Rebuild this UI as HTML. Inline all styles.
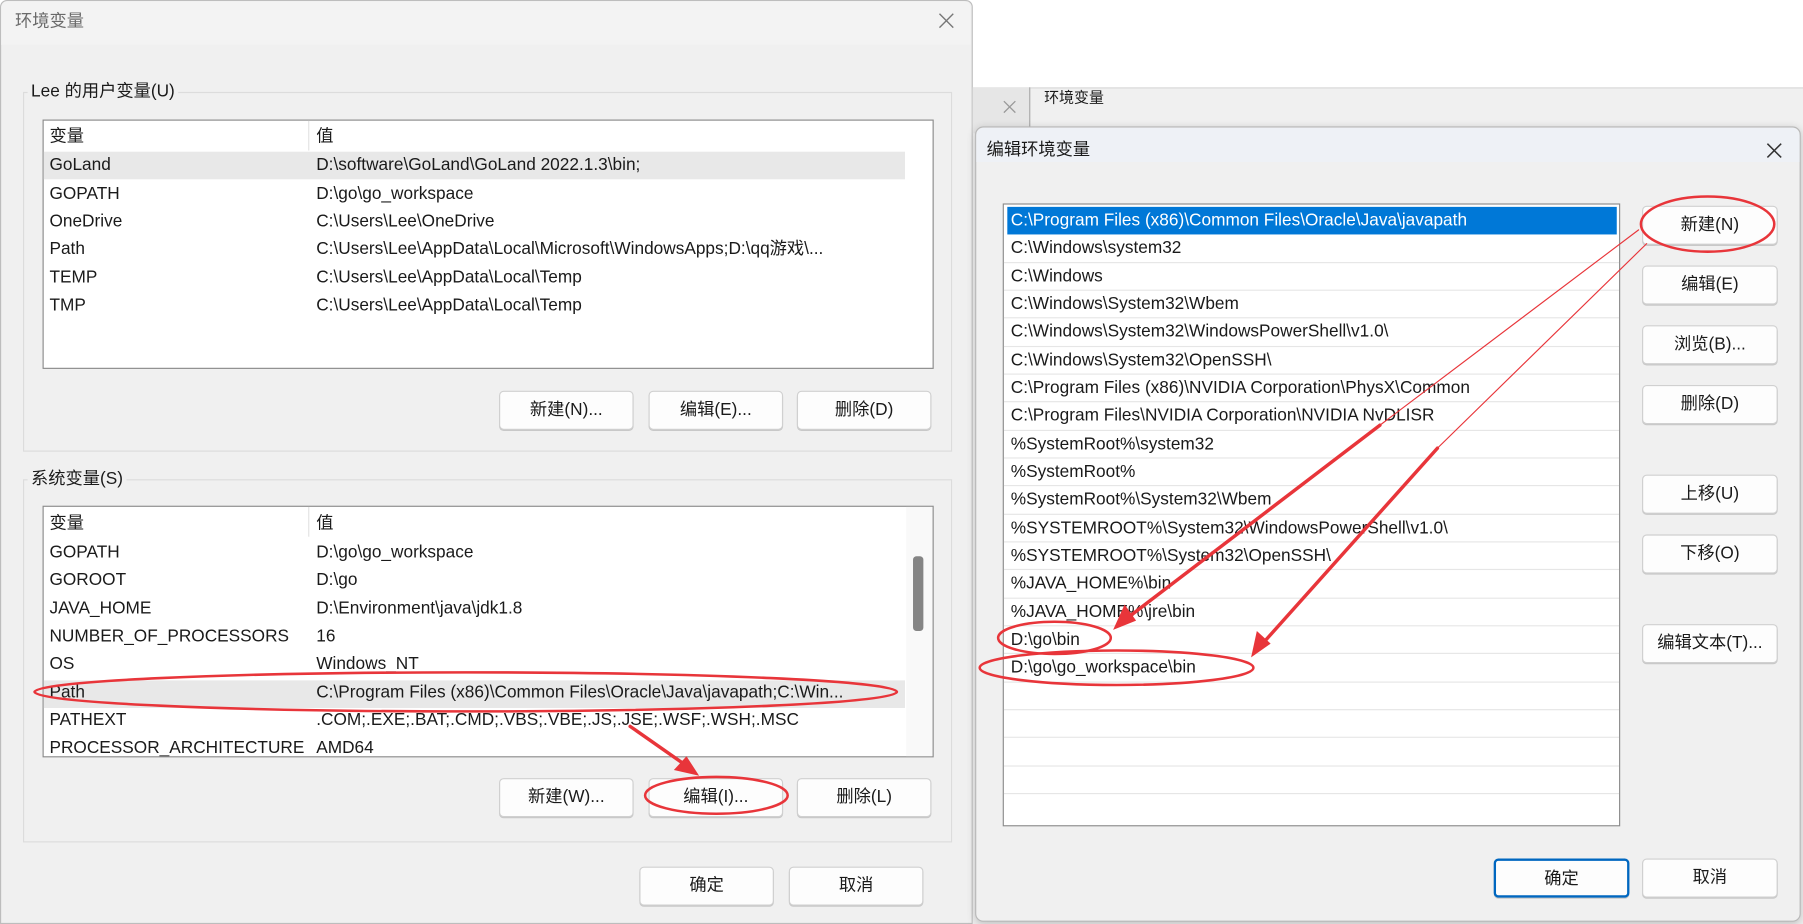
<!DOCTYPE html>
<html><head><meta charset="utf-8"><style>
*{margin:0;padding:0;box-sizing:border-box}
html,body{width:1803px;height:924px;overflow:hidden;background:#fff}
#s{position:absolute;left:0;top:0;width:1568px;height:804px;transform:scale(1.1499,1.1493);transform-origin:0 0;font-family:"Liberation Sans","Noto Sans CJK SC",sans-serif;font-size:15px;color:#1a1a1a}
.a{position:absolute}
.t{position:absolute;white-space:nowrap;line-height:20px}
.btn{position:absolute;background:#fdfdfd;border:1px solid #d0d0d0;border-radius:4px;text-align:center;font-size:15px;line-height:32px;box-shadow:0 1px 0 #c8c8c8}
.list{position:absolute;background:#fff;border:1px solid #8a8a8a}
.grp{position:absolute;border:1px solid #dcdcdc}
.lbl{position:absolute;background:#f0f0f0;padding:0 3px;line-height:20px;white-space:nowrap}
.row{position:absolute;left:0;right:0;height:24px}
.sep{position:absolute;left:0;right:0;height:1px;background:#e6e6e6}
</style></head><body><div id="s">
<!-- left dialog -->
<div class="a" style="left:0;top:0;width:846px;height:804px;background:#f0f0f0;border:1px solid #bdbdbd;border-radius:6px 6px 0 0"></div>
<div class="a" style="left:1px;top:1px;width:843px;height:38px;background:#f3f3f3;border-radius:6px 6px 0 0"></div>
<div class="t" style="left:13px;top:9px;color:#6a6a6a">环境变量</div>
<svg class="a" style="left:816px;top:11px" width="14" height="14"><path d="M1 1L13 13M13 1L1 13" stroke="#777" stroke-width="1.2"/></svg>

<div class="grp" style="left:20px;top:80px;width:808px;height:313px"></div>
<div class="lbl" style="left:24px;top:70px">Lee 的用户变量(U)</div>
<div class="list" style="left:37px;top:104px;width:775px;height:217px">
 <div class="row" style="top:27px;right:24px;background:#e8e8e8"></div>
 <div class="a" style="left:230px;top:0;width:1px;height:26px;background:#e2e2e2"></div>
 <div class="t" style="left:5px;top:4px">变量</div><div class="t" style="left:237px;top:4px">值</div>
 <div class="t" style="left:5px;top:29px">GoLand</div><div class="t" style="left:237px;top:29px">D:\software\GoLand\GoLand 2022.1.3\bin;</div>
 <div class="t" style="left:5px;top:54px">GOPATH</div><div class="t" style="left:237px;top:54px">D:\go\go_workspace</div>
 <div class="t" style="left:5px;top:78px">OneDrive</div><div class="t" style="left:237px;top:78px">C:\Users\Lee\OneDrive</div>
 <div class="t" style="left:5px;top:102px">Path</div><div class="t" style="left:237px;top:102px">C:\Users\Lee\AppData\Local\Microsoft\WindowsApps;D:\qq游戏\...</div>
 <div class="t" style="left:5px;top:127px">TEMP</div><div class="t" style="left:237px;top:127px">C:\Users\Lee\AppData\Local\Temp</div>
 <div class="t" style="left:5px;top:151px">TMP</div><div class="t" style="left:237px;top:151px">C:\Users\Lee\AppData\Local\Temp</div>
</div>
<div class="btn" style="left:434px;top:340px;width:117px;height:34px">新建(N)...</div>
<div class="btn" style="left:564px;top:340px;width:117px;height:34px">编辑(E)...</div>
<div class="btn" style="left:693px;top:340px;width:117px;height:34px">删除(D)</div>

<div class="grp" style="left:20px;top:417px;width:808px;height:316px"></div>
<div class="lbl" style="left:24px;top:407px">系统变量(S)</div>
<div class="list" style="left:37px;top:440px;width:775px;height:219px;overflow:hidden">
 <div class="row" style="top:151px;right:24px;background:#e8e8e8"></div>
 <div class="a" style="left:230px;top:0;width:1px;height:26px;background:#e2e2e2"></div>
 <div class="a" style="left:750px;top:0;width:23px;height:217px;background:#f9f9f9"></div>
 <div class="a" style="left:756px;top:43px;width:9px;height:65px;background:#858585;border-radius:3px"></div>
 <div class="t" style="left:5px;top:5px">变量</div><div class="t" style="left:237px;top:5px">值</div>
 <div class="t" style="left:5px;top:30px">GOPATH</div><div class="t" style="left:237px;top:30px">D:\go\go_workspace</div>
 <div class="t" style="left:5px;top:54px">GOROOT</div><div class="t" style="left:237px;top:54px">D:\go</div>
 <div class="t" style="left:5px;top:79px">JAVA_HOME</div><div class="t" style="left:237px;top:79px">D:\Environment\java\jdk1.8</div>
 <div class="t" style="left:5px;top:103px">NUMBER_OF_PROCESSORS</div><div class="t" style="left:237px;top:103px">16</div>
 <div class="t" style="left:5px;top:127px">OS</div><div class="t" style="left:237px;top:127px">Windows_NT</div>
 <div class="t" style="left:5px;top:152px">Path</div><div class="t" style="left:237px;top:152px">C:\Program Files (x86)\Common Files\Oracle\Java\javapath;C:\Win...</div>
 <div class="t" style="left:5px;top:176px">PATHEXT</div><div class="t" style="left:237px;top:176px">.COM;.EXE;.BAT;.CMD;.VBS;.VBE;.JS;.JSE;.WSF;.WSH;.MSC</div>
 <div class="t" style="left:5px;top:200px">PROCESSOR_ARCHITECTURE</div><div class="t" style="left:237px;top:200px">AMD64</div>
</div>
<div class="btn" style="left:434px;top:677px;width:117px;height:34px">新建(W)...</div>
<div class="btn" style="left:564px;top:677px;width:117px;height:34px">编辑(I)...</div>
<div class="btn" style="left:693px;top:677px;width:117px;height:34px">删除(L)</div>
<div class="btn" style="left:556px;top:754px;width:117px;height:34px">确定</div>
<div class="btn" style="left:686px;top:754px;width:117px;height:34px">取消</div>

<!-- behind window -->
<div class="a" style="left:846px;top:76px;width:722px;height:728px;background:#f0f0f0;border-top:1px solid #d8d8d8"></div>
<div class="a" style="left:846px;top:76px;width:50px;height:40px;background:#e6e6e6;border-right:1px solid #aaa"></div>
<svg class="a" style="left:872px;top:87px" width="12" height="12"><path d="M1 1L11 11M11 1L1 11" stroke="#999" stroke-width="1.1"/></svg>
<div class="t" style="left:908px;top:75px;font-size:13px">环境变量</div>

<!-- edit dialog -->
<div class="a" style="left:848px;top:110px;width:718px;height:692px;background:#f0f0f0;border:1px solid #b8b8b8;border-radius:7px;box-shadow:0 2px 8px rgba(0,0,0,.2)"></div>
<div class="a" style="left:849px;top:111px;width:716px;height:30px;background:#eef1f6;border-radius:7px 7px 0 0"></div>
<div class="t" style="left:858px;top:121px">编辑环境变量</div>
<svg class="a" style="left:1536px;top:124px" width="14" height="14"><path d="M1 1L13 13M13 1L1 13" stroke="#333" stroke-width="1.3"/></svg>
<div class="list" style="left:872px;top:177px;width:537px;height:542px;overflow:hidden">
 <div class="a" style="left:3px;top:2px;width:530px;height:24px;background:#0078d7"></div>
 <div class="t" style="left:6px;top:4px;color:#fff">C:\Program Files (x86)\Common Files\Oracle\Java\javapath</div>
 <div class="sep" style="top:50px"></div><div class="sep" style="top:74px"></div><div class="sep" style="top:98px"></div><div class="sep" style="top:123px"></div><div class="sep" style="top:147px"></div><div class="sep" style="top:171px"></div><div class="sep" style="top:196px"></div><div class="sep" style="top:220px"></div><div class="sep" style="top:244px"></div><div class="sep" style="top:269px"></div><div class="sep" style="top:293px"></div><div class="sep" style="top:317px"></div><div class="sep" style="top:342px"></div><div class="sep" style="top:366px"></div><div class="sep" style="top:390px"></div><div class="sep" style="top:415px"></div><div class="sep" style="top:439px"></div><div class="sep" style="top:463px"></div><div class="sep" style="top:488px"></div><div class="sep" style="top:512px"></div>
 <div class="t" style="left:6px;top:28px">C:\Windows\system32</div>
 <div class="t" style="left:6px;top:53px">C:\Windows</div>
 <div class="t" style="left:6px;top:77px">C:\Windows\System32\Wbem</div>
 <div class="t" style="left:6px;top:101px">C:\Windows\System32\WindowsPowerShell\v1.0\</div>
 <div class="t" style="left:6px;top:126px">C:\Windows\System32\OpenSSH\</div>
 <div class="t" style="left:6px;top:150px">C:\Program Files (x86)\NVIDIA Corporation\PhysX\Common</div>
 <div class="t" style="left:6px;top:174px">C:\Program Files\NVIDIA Corporation\NVIDIA NvDLISR</div>
 <div class="t" style="left:6px;top:199px">%SystemRoot%\system32</div>
 <div class="t" style="left:6px;top:223px">%SystemRoot%</div>
 <div class="t" style="left:6px;top:247px">%SystemRoot%\System32\Wbem</div>
 <div class="t" style="left:6px;top:272px">%SYSTEMROOT%\System32\WindowsPowerShell\v1.0\</div>
 <div class="t" style="left:6px;top:296px">%SYSTEMROOT%\System32\OpenSSH\</div>
 <div class="t" style="left:6px;top:320px">%JAVA_HOME%\bin</div>
 <div class="t" style="left:6px;top:345px">%JAVA_HOME%\jre\bin</div>
 <div class="t" style="left:6px;top:369px">D:\go\bin</div>
 <div class="t" style="left:6px;top:393px">D:\go\go_workspace\bin</div>
</div>
<div class="btn" style="left:1428px;top:179px;width:118px;height:34px">新建(N)</div>
<div class="btn" style="left:1428px;top:231px;width:118px;height:34px">编辑(E)</div>
<div class="btn" style="left:1428px;top:283px;width:118px;height:34px">浏览(B)...</div>
<div class="btn" style="left:1428px;top:335px;width:118px;height:34px">删除(D)</div>
<div class="btn" style="left:1428px;top:413px;width:118px;height:34px">上移(U)</div>
<div class="btn" style="left:1428px;top:465px;width:118px;height:34px">下移(O)</div>
<div class="btn" style="left:1428px;top:543px;width:118px;height:34px">编辑文本(T)...</div>
<div class="btn" style="left:1299px;top:747px;width:118px;height:34px;border:2px solid #0067c0">确定</div>
<div class="btn" style="left:1428px;top:747px;width:118px;height:34px">取消</div>

<svg class="a" style="left:0;top:0" width="1568" height="804" viewBox="0 0 1568 804">
<g fill="none" stroke="#e8353a" stroke-width="2.2">
<ellipse cx="405" cy="602" rx="375" ry="17"/>
<ellipse cx="623" cy="692" rx="62" ry="16"/>
<ellipse cx="1485" cy="195" rx="58" ry="24"/>
<ellipse cx="917" cy="555" rx="49" ry="14"/>
<ellipse cx="971" cy="581" rx="119" ry="15"/>
</g>
<g stroke="#e8353a" stroke-linecap="round">
<line x1="548" y1="632" x2="598" y2="667" stroke-width="3"/>
<line x1="1425" y1="200" x2="1200" y2="370" stroke-width="1"/>
<line x1="1200" y1="370" x2="980" y2="538" stroke-width="3"/>
<line x1="1432" y1="212" x2="1250" y2="390" stroke-width="1"/>
<line x1="1250" y1="390" x2="1098" y2="560" stroke-width="3"/>
</g>
<g fill="#e8353a">
<polygon points="608,675 586,670 597,658"/>
<polygon points="968,548 978,526 988,540"/>
<polygon points="1088,572 1093,549 1105,560"/>
</g>
</svg>
</div></body></html>
